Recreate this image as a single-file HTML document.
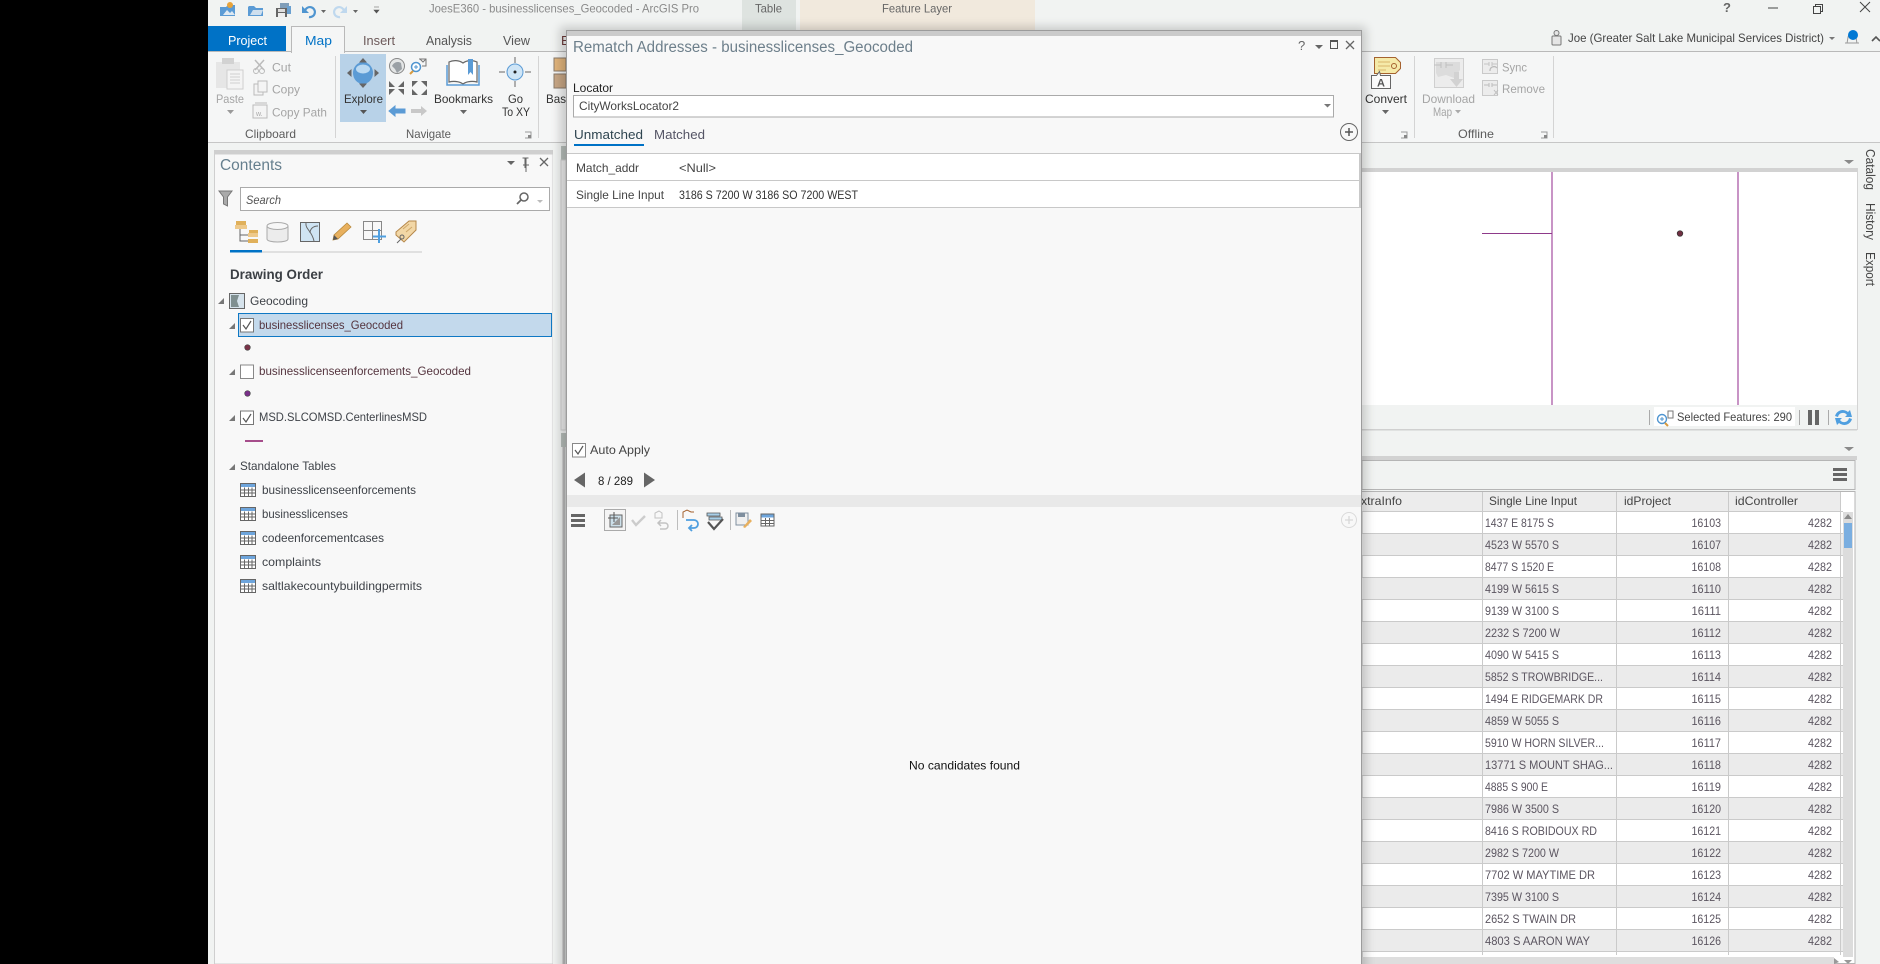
<!DOCTYPE html>
<html lang="en">
<head>
<meta charset="utf-8">
<title>Rematch Addresses - ArcGIS Pro</title>
<style>
html,body{margin:0;padding:0;width:1880px;height:964px;overflow:hidden;background:#f1f3f2}
svg{display:block}
text{font-family:"Liberation Sans",sans-serif;font-size:12px;fill:#4a4a4a;white-space:pre}
.g{fill:#a5a5a5}
.d{fill:#333}
.t{fill:#5c5c5c}
.n{fill:#5b5560}
</style>
</head>
<body>
<svg xmlns="http://www.w3.org/2000/svg" width="1880" height="964" viewBox="0 0 1880 964">
<defs>
<filter id="sh" x="-5%" y="-5%" width="110%" height="110%"><feGaussianBlur stdDeviation="5"/></filter>
<g id="tbl"><rect x="0" y="0" width="15" height="13" fill="#fff" stroke="#666" stroke-width="1"/><rect x="0.5" y="0.5" width="14" height="3" fill="#6ea5dc"/><path d="M0 6.5h15M0 9.5h15M4 4v9M8 4v9M11.5 4v9" stroke="#666" stroke-width="1" fill="none"/></g>
</defs>

<!-- base -->
<rect width="1880" height="964" fill="#f1f3f2"/>
<rect x="0" y="0" width="208" height="964" fill="#000"/>

<!-- title bar context tabs -->
<rect x="742" y="0" width="54" height="30" fill="#dee3e0"/>
<rect x="800" y="0" width="235" height="30" fill="#f1e9dd"/>
<text x="755" y="12.500" textLength="27" lengthAdjust="spacingAndGlyphs" style="fill:#666">Table</text>
<text x="882" y="12.500" textLength="70" lengthAdjust="spacingAndGlyphs" style="fill:#666">Feature Layer</text>
<text x="429" y="12.500" textLength="270" lengthAdjust="spacingAndGlyphs" style="fill:#8a8a8a">JoesE360 - businesslicenses_Geocoded - ArcGIS Pro</text>

<!-- QAT icons -->
<g>
<path d="M220 7h6l2-2h7v11h-15z" fill="#5b9bd5"/><path d="M223 15l4-5 3 3 2-2 3 4z" fill="#dfe9f2"/><circle cx="230" cy="5" r="3" fill="#e8a33a"/>
<path d="M248 7v9h15V8h-7l-2-2h-5z" fill="#5b9bd5"/><path d="M250 15l3-5h10l-2 5z" fill="#cfdfee"/>
<rect x="276" y="8" width="11" height="9" fill="#666"/><rect x="278" y="13" width="7" height="4" fill="#eee"/><rect x="278" y="9" width="7" height="3" fill="#ddd"/><path d="M280 3h9v11h-2V8h-7z" fill="#7f9db8"/><rect x="287" y="6" width="4" height="8" fill="#6aa0d0"/>
<path d="M305 11a5 5 0 1 1 4 6" fill="none" stroke="#4f95d0" stroke-width="2.200"/><path d="M302 6v7h7z" fill="#4f95d0"/>
<path d="M321 10h5l-2.500 3z" fill="#666"/>
<path d="M344 11a5 5 0 1 0-4 6" fill="none" stroke="#bfd8ee" stroke-width="2.200"/><path d="M347 6v7h-7z" fill="#bfd8ee"/>
<path d="M353 10h5l-2.500 3z" fill="#666"/>
<path d="M374 7h5M374 10h5l-2.500 3z" fill="#555" stroke="#555" stroke-width=".6"/>
</g>

<!-- ribbon -->
<rect x="208" y="51" width="1672" height="91" fill="#f5f6f6"/>
<rect x="208" y="51" width="1672" height="1" fill="#b9b9b9"/>
<rect x="208" y="142" width="1672" height="1" fill="#c6c6c6"/>
<rect x="208" y="26" width="78" height="25" fill="#0072c6"/>
<rect x="291.500" y="26.500" width="53" height="26" fill="#f5f6f6" stroke="#b9b9b9"/><rect x="292" y="50" width="52" height="3" fill="#f5f6f6"/>
<text x="228" y="45" textLength="39" lengthAdjust="spacingAndGlyphs" style="fill:#fff;font-size:13px">Project</text>
<text x="305" y="45" textLength="27" lengthAdjust="spacingAndGlyphs" style="fill:#0072c6;font-size:13px">Map</text>
<text x="363" y="45" textLength="32" lengthAdjust="spacingAndGlyphs" style="fill:#6d5a5a;font-size:13px">Insert</text>
<text x="426" y="45" textLength="46" lengthAdjust="spacingAndGlyphs" style="fill:#555;font-size:13px">Analysis</text>
<text x="503" y="45" textLength="27" lengthAdjust="spacingAndGlyphs" style="fill:#555;font-size:13px">View</text>
<text x="561" y="45" style="fill:#6d3a3a;font-size:13px">E</text>

<rect x="340" y="54" width="46" height="68" fill="#b8d2e8"/>
<path d="M335.500 56v82M538.500 56v82M1414.500 56v82M1553.500 56v82" stroke="#d4d4d4"/>

<!-- paste -->
<rect x="216" y="62" width="24" height="26" fill="#e6e6e6"/><rect x="222" y="58" width="12" height="6" fill="#d2d2d2"/><rect x="227" y="70" width="16" height="19" fill="#f4f4f4" stroke="#cfcfcf"/><path d="M230 74h10M230 77h10M230 80h10M230 83h10" stroke="#cfcfcf"/>
<text x="216" y="103" textLength="28" lengthAdjust="spacingAndGlyphs" class="g">Paste</text><path d="M227 110h7l-3.500 4z" fill="#9a9a9a"/>
<path d="M255 60l9 10M264 60l-9 10" stroke="#bbb" stroke-width="1.500"/><circle cx="256" cy="71" r="2.500" fill="none" stroke="#bbb"/><circle cx="262" cy="71" r="2.500" fill="none" stroke="#bbb"/>
<text x="272" y="71.500" textLength="19" lengthAdjust="spacingAndGlyphs" class="g">Cut</text>
<rect x="254" y="84" width="9" height="11" fill="#f4f4f4" stroke="#bbb"/><rect x="258" y="81" width="9" height="11" fill="#f4f4f4" stroke="#bbb"/>
<text x="272" y="93.500" textLength="28" lengthAdjust="spacingAndGlyphs" class="g">Copy</text>
<rect x="253" y="105" width="14" height="13" fill="#f4f4f4" stroke="#bbb"/><path d="M255 103h12" stroke="#bbb"/><text x="256" y="116" style="font-size:7px;fill:#aaa">w.</text>
<text x="272" y="116.500" textLength="55" lengthAdjust="spacingAndGlyphs" class="g">Copy Path</text>
<text x="245" y="138" textLength="51" lengthAdjust="spacingAndGlyphs" class="t">Clipboard</text>

<!-- explore -->
<ellipse cx="363" cy="73" rx="10" ry="11" fill="#5b9bd5"/><ellipse cx="363" cy="69" rx="7" ry="4.500" fill="#bcdaf2"/>
<path d="M363 58l4 4.500h-8zM363 88l4-4.500h-8zM347 73l4.500-4v8zM379 73l-4.500-4v8z" fill="#666"/>
<text x="344" y="103" textLength="39" lengthAdjust="spacingAndGlyphs" class="d">Explore</text><path d="M360 110h7l-3.500 4z" fill="#555"/>
<circle cx="397" cy="66" r="7.500" fill="#e4e6e6" stroke="#888"/><path d="M392 66c2-4 6-5 9-3l1 6-5 4-2-4z" fill="#9aa0a5"/>
<circle cx="416" cy="67" r="4.500" fill="#fff" stroke="#4f95d0" stroke-width="1.500"/><path d="M414 67h4M416 65v4" stroke="#4f95d0"/><path d="M413 71l-3 3" stroke="#d99b3e" stroke-width="2"/><path d="M419 59h7v7h-4" fill="none" stroke="#777"/><path d="M420 59l3 3 3-3" fill="none" stroke="#777"/>
<!-- fixed zoom in / out clusters -->
<path d="M389 81l6 6H389zM404 81l-6 6h6zM389 95l6-6H389zM404 95l-6-6h6z" fill="#666" transform="translate(0,0)"/>
<path d="M412 87v-6h6zM427 87v-6h-6zM412 89v6h6zM427 89v6h-6z" fill="#666"/>
<path d="M405 111h-10M395 106l-6 5 6 5v-3h10v-4h-10z" fill="#5b9bd5" stroke="#5b9bd5"/>
<path d="M411 109h10v-3l6 5-6 5v-3h-10z" fill="#c8c8c8"/>
<text x="406" y="138" textLength="45" lengthAdjust="spacingAndGlyphs" class="t">Navigate</text>
<path d="M525 132h6v6h-6" fill="none" stroke="#999"/><path d="M528 135h3v3h-3z" fill="#888"/>
<!-- bookmarks -->
<path d="M463 84c-4-3-10-3-14-2V62c4-2 10-2 14 1c4-3 10-3 14-1v20c-4-1-10-1-14 2z" fill="#fff" stroke="#666" stroke-width="1.200"/><path d="M447 65v20h32V65" fill="none" stroke="#5b9bd5" stroke-width="1.500"/><path d="M468 59h5v16l-2.500-3-2.500 3z" fill="#5b9bd5"/>
<text x="434" y="103" textLength="59" lengthAdjust="spacingAndGlyphs" class="d">Bookmarks</text><path d="M460 110h7l-3.500 4z" fill="#666"/>
<!-- go to xy -->
<circle cx="515" cy="72" r="8" fill="#cfe5f6" stroke="#5b9bd5"/><circle cx="515" cy="72" r="1.500" fill="#222"/><path d="M515 57v6M515 81v6M499 72h6M525 72h6" stroke="#666"/>
<text x="508" y="103" textLength="15" lengthAdjust="spacingAndGlyphs" class="d">Go</text>
<text x="502" y="116" textLength="28" lengthAdjust="spacingAndGlyphs" class="d">To XY</text>
<!-- basemap -->
<rect x="554" y="58" width="12" height="13" fill="#e2b57c" stroke="#8a7a6a"/><rect x="554" y="74" width="12" height="14" fill="#c9a886" stroke="#8a7a6a"/>
<text x="546" y="103" textLength="20" lengthAdjust="spacingAndGlyphs" class="d">Bas</text>

<!-- right ribbon -->
<path d="M1374.500 57.500h21l5 5v6l-5 5h-21z" fill="#f5eaa9" stroke="#a5622f"/><path d="M1378 62h12M1378 66h12M1378 70h8" stroke="#d9b56a"/><circle cx="1394" cy="66" r="2.500" fill="none" stroke="#a5622f"/>
<path d="M1371.500 75.500h5l3-4 1 4h10v13h-19z" fill="#fbfbfb" stroke="#666"/><text x="1377" y="86.500" style="font-size:11px;font-weight:bold;fill:#555">A</text>
<text x="1365" y="103" textLength="42" lengthAdjust="spacingAndGlyphs" class="d">Convert</text><path d="M1382 110h7l-3.500 4z" fill="#666"/>
<path d="M1401 132h6v6h-6" fill="none" stroke="#999"/><path d="M1404 135h3v3h-3z" fill="#888"/>
<rect x="1434.500" y="58.500" width="29" height="29" fill="#ececec" stroke="#cfcfcf"/><path d="M1436 62h24v8l-6 8-8-3-8 2-2-4z" fill="#dcdcdc"/><path d="M1434 65h7M1446 65h7M1441 62v6M1446 62v6" stroke="#c0c0c0"/><path d="M1454 72h5v7h4l-6.500 8-6.500-8h4z" fill="#d2d2d2"/>
<text x="1422" y="103" textLength="53" lengthAdjust="spacingAndGlyphs" class="g">Download</text>
<text x="1433" y="116" textLength="19" lengthAdjust="spacingAndGlyphs" class="g">Map</text><path d="M1455 110h6l-3 3.500z" fill="#aaa"/>
<rect x="1482.500" y="59.500" width="15" height="14" fill="#ececec" stroke="#c9c9c9"/><path d="M1484 64h5M1492 64h5M1489 62v4M1492 62v4" stroke="#c4c4c4"/><path d="M1490 71a4 4 0 0 1 7-3" fill="none" stroke="#bbb" stroke-width="1.300"/>
<rect x="1482.500" y="80.500" width="15" height="15" fill="#ececec" stroke="#c9c9c9"/><path d="M1484 85h5M1492 85h5M1489 83v4M1492 83v4M1494 90l4 5M1498 90l-4 5" stroke="#bdbdbd"/>
<text x="1502" y="71.500" textLength="25" lengthAdjust="spacingAndGlyphs" class="g">Sync</text>
<text x="1502" y="93" textLength="43" lengthAdjust="spacingAndGlyphs" class="g">Remove</text>
<text x="1458" y="138" textLength="36" lengthAdjust="spacingAndGlyphs" class="t">Offline</text>
<path d="M1541 132h6v6h-6" fill="none" stroke="#999"/><path d="M1544 135h3v3h-3z" fill="#888"/>

<!-- window controls -->
<text x="1723" y="12" style="font-size:13px;font-weight:bold;fill:#666">?</text>
<path d="M1768 8h10" stroke="#444"/><rect x="1815.500" y="4.500" width="7" height="7" fill="none" stroke="#444"/><rect x="1813.500" y="6.500" width="7" height="7" fill="#f1f3f2" stroke="#444"/>
<path d="M1860 2l10 10M1870 2l-10 10" stroke="#444"/>
<rect x="1552" y="36" width="9" height="9" rx="1" fill="#e5e5e5" stroke="#777"/><circle cx="1556.500" cy="33" r="2.500" fill="#e5e5e5" stroke="#777"/>
<text x="1568" y="42" textLength="256" lengthAdjust="spacingAndGlyphs" style="fill:#444">Joe (Greater Salt Lake Municipal Services District)</text>
<path d="M1829 37h6l-3 3z" fill="#777"/>
<path d="M1845 43h14M1847 43c1-3 0-9 5-10c5 1 4 7 5 10" fill="#f1f3f2" stroke="#999"/><circle cx="1853" cy="35" r="5" fill="#0078d4"/>
<path d="M1872 41l4-4 4 4" fill="none" stroke="#555" stroke-width="1.600"/>

<!-- side bars -->
<path d="M1854 160h-10l5 4z" fill="#8a8a8a"/>
<g transform="translate(1862,149) rotate(90)"><text x="0" y="-4" textLength="41" lengthAdjust="spacingAndGlyphs" style="font-size:13px;fill:#444">Catalog</text><text x="54" y="-4" textLength="37" lengthAdjust="spacingAndGlyphs" style="font-size:13px;fill:#444">History</text><text x="103" y="-4" textLength="34" lengthAdjust="spacingAndGlyphs" style="font-size:13px;fill:#444">Export</text></g>

<!-- map -->
<rect x="1362" y="168" width="495" height="4" fill="#d2d2d2"/>
<rect x="1362" y="172" width="495" height="233" fill="#fff"/>
<path d="M1552 172v233M1738 172v233" stroke="#9a3d96" stroke-width="1.100"/>
<path d="M1482 233.500h70" stroke="#8e3a8a" stroke-width="1.100"/>
<circle cx="1680" cy="233.500" r="2.800" fill="#6f2f42" stroke="#333" stroke-width=".7"/>
<rect x="1857" y="168" width="1" height="262" fill="#d4d4d4"/>
<rect x="1362" y="429" width="495" height="1.500" fill="#d0d0d0"/>
<rect x="1654" y="407" width="141" height="19" fill="#fff"/>
<path d="M1649.500 410v15M1799.500 410v15M1828.500 410v15" stroke="#aaa"/>
<circle cx="1662" cy="419" r="4.500" fill="#fff" stroke="#4f95d0" stroke-width="1.400"/><path d="M1660 419h4M1662 417v4" stroke="#4f95d0"/><path d="M1665 423l3 3" stroke="#d99b3e" stroke-width="2"/><path d="M1668 411h5v7h-5z" fill="#fff" stroke="#777"/>
<text x="1677" y="421" textLength="115" lengthAdjust="spacingAndGlyphs" style="fill:#444">Selected Features: 290</text>
<rect x="1808" y="410" width="4" height="15" fill="#666"/><rect x="1815" y="410" width="4" height="15" fill="#666"/>
<path d="M1835 416a8 8 0 0 1 13-4l2-2 2 7h-7l2-2a5 5 0 0 0-9 2zM1852 419a8 8 0 0 1-13 4l-2 2-2-7h7l-2 2a5 5 0 0 0 9-2z" fill="#4f9fe0"/>
<path d="M1854 447h-10l5 4z" fill="#8a8a8a"/>

<!-- table pane -->
<rect x="1362" y="456" width="495" height="4" fill="#d2d2d2"/>
<rect x="1362" y="460.500" width="493" height="29" fill="#f1f3f2" stroke="#b5b5b5"/>
<rect x="1833" y="468" width="14" height="3" fill="#666"/><rect x="1833" y="473" width="14" height="3" fill="#666"/><rect x="1833" y="478" width="14" height="3" fill="#666"/>
<rect x="1362" y="491.500" width="493" height="472" fill="#fff" stroke="#b5b5b5"/>
<rect x="1362" y="492" width="478" height="19" fill="#ececec"/>
<g fill="#ebebeb">
<rect x="1362" y="533" width="481" height="22"/><rect x="1362" y="577" width="481" height="22"/><rect x="1362" y="621" width="481" height="22"/><rect x="1362" y="665" width="481" height="22"/><rect x="1362" y="709" width="481" height="22"/><rect x="1362" y="753" width="481" height="22"/><rect x="1362" y="797" width="481" height="22"/><rect x="1362" y="841" width="481" height="22"/><rect x="1362" y="885" width="481" height="22"/><rect x="1362" y="929" width="481" height="22"/>
</g>
<g stroke="#cacaca" fill="none">
<path d="M1362 511.500h481M1362 533.500h481M1362 555.500h481M1362 577.500h481M1362 599.500h481M1362 621.500h481M1362 643.500h481M1362 665.500h481M1362 687.500h481M1362 709.500h481M1362 731.500h481M1362 753.500h481M1362 775.500h481M1362 797.500h481M1362 819.500h481M1362 841.500h481M1362 863.500h481M1362 885.500h481M1362 907.500h481M1362 929.500h481M1362 951.500h481"/>
<path d="M1482.500 492v463M1616.500 492v463M1728.500 492v463M1840.500 492v463"/>
</g>
<text x="1361" y="505" textLength="41" lengthAdjust="spacingAndGlyphs" style="fill:#444">xtraInfo</text>
<text x="1489" y="505" textLength="88" lengthAdjust="spacingAndGlyphs" style="fill:#444">Single Line Input</text>
<text x="1624" y="505" textLength="47" lengthAdjust="spacingAndGlyphs" style="fill:#444">idProject</text>
<text x="1735" y="505" textLength="63" lengthAdjust="spacingAndGlyphs" style="fill:#444">idController</text>

<g class="rows">
<text class="n" x="1485" y="527" textLength="69" lengthAdjust="spacingAndGlyphs">1437 E 8175 S</text><text class="n" x="1691.500" y="527" textLength="29.500" lengthAdjust="spacingAndGlyphs">16103</text><text class="n" x="1808" y="527" textLength="24" lengthAdjust="spacingAndGlyphs">4282</text>
<text class="n" x="1485" y="549" textLength="74" lengthAdjust="spacingAndGlyphs">4523 W 5570 S</text><text class="n" x="1691.500" y="549" textLength="29.500" lengthAdjust="spacingAndGlyphs">16107</text><text class="n" x="1808" y="549" textLength="24" lengthAdjust="spacingAndGlyphs">4282</text>
<text class="n" x="1485" y="571" textLength="69" lengthAdjust="spacingAndGlyphs">8477 S 1520 E</text><text class="n" x="1691.500" y="571" textLength="29.500" lengthAdjust="spacingAndGlyphs">16108</text><text class="n" x="1808" y="571" textLength="24" lengthAdjust="spacingAndGlyphs">4282</text>
<text class="n" x="1485" y="593" textLength="74" lengthAdjust="spacingAndGlyphs">4199 W 5615 S</text><text class="n" x="1691.500" y="593" textLength="29.500" lengthAdjust="spacingAndGlyphs">16110</text><text class="n" x="1808" y="593" textLength="24" lengthAdjust="spacingAndGlyphs">4282</text>
<text class="n" x="1485" y="615" textLength="74" lengthAdjust="spacingAndGlyphs">9139 W 3100 S</text><text class="n" x="1691.500" y="615" textLength="29.500" lengthAdjust="spacingAndGlyphs">16111</text><text class="n" x="1808" y="615" textLength="24" lengthAdjust="spacingAndGlyphs">4282</text>
<text class="n" x="1485" y="637" textLength="75" lengthAdjust="spacingAndGlyphs">2232 S 7200 W</text><text class="n" x="1691.500" y="637" textLength="29.500" lengthAdjust="spacingAndGlyphs">16112</text><text class="n" x="1808" y="637" textLength="24" lengthAdjust="spacingAndGlyphs">4282</text>
<text class="n" x="1485" y="659" textLength="74" lengthAdjust="spacingAndGlyphs">4090 W 5415 S</text><text class="n" x="1691.500" y="659" textLength="29.500" lengthAdjust="spacingAndGlyphs">16113</text><text class="n" x="1808" y="659" textLength="24" lengthAdjust="spacingAndGlyphs">4282</text>
<text class="n" x="1485" y="681" textLength="118" lengthAdjust="spacingAndGlyphs">5852 S TROWBRIDGE...</text><text class="n" x="1691.500" y="681" textLength="29.500" lengthAdjust="spacingAndGlyphs">16114</text><text class="n" x="1808" y="681" textLength="24" lengthAdjust="spacingAndGlyphs">4282</text>
<text class="n" x="1485" y="703" textLength="118" lengthAdjust="spacingAndGlyphs">1494 E RIDGEMARK DR</text><text class="n" x="1691.500" y="703" textLength="29.500" lengthAdjust="spacingAndGlyphs">16115</text><text class="n" x="1808" y="703" textLength="24" lengthAdjust="spacingAndGlyphs">4282</text>
<text class="n" x="1485" y="725" textLength="74" lengthAdjust="spacingAndGlyphs">4859 W 5055 S</text><text class="n" x="1691.500" y="725" textLength="29.500" lengthAdjust="spacingAndGlyphs">16116</text><text class="n" x="1808" y="725" textLength="24" lengthAdjust="spacingAndGlyphs">4282</text>
<text class="n" x="1485" y="747" textLength="119" lengthAdjust="spacingAndGlyphs">5910 W HORN SILVER...</text><text class="n" x="1691.500" y="747" textLength="29.500" lengthAdjust="spacingAndGlyphs">16117</text><text class="n" x="1808" y="747" textLength="24" lengthAdjust="spacingAndGlyphs">4282</text>
<text class="n" x="1485" y="769" textLength="128" lengthAdjust="spacingAndGlyphs">13771 S MOUNT SHAG...</text><text class="n" x="1691.500" y="769" textLength="29.500" lengthAdjust="spacingAndGlyphs">16118</text><text class="n" x="1808" y="769" textLength="24" lengthAdjust="spacingAndGlyphs">4282</text>
<text class="n" x="1485" y="791" textLength="63" lengthAdjust="spacingAndGlyphs">4885 S 900 E</text><text class="n" x="1691.500" y="791" textLength="29.500" lengthAdjust="spacingAndGlyphs">16119</text><text class="n" x="1808" y="791" textLength="24" lengthAdjust="spacingAndGlyphs">4282</text>
<text class="n" x="1485" y="813" textLength="74" lengthAdjust="spacingAndGlyphs">7986 W 3500 S</text><text class="n" x="1691.500" y="813" textLength="29.500" lengthAdjust="spacingAndGlyphs">16120</text><text class="n" x="1808" y="813" textLength="24" lengthAdjust="spacingAndGlyphs">4282</text>
<text class="n" x="1485" y="835" textLength="112" lengthAdjust="spacingAndGlyphs">8416 S ROBIDOUX RD</text><text class="n" x="1691.500" y="835" textLength="29.500" lengthAdjust="spacingAndGlyphs">16121</text><text class="n" x="1808" y="835" textLength="24" lengthAdjust="spacingAndGlyphs">4282</text>
<text class="n" x="1485" y="857" textLength="74" lengthAdjust="spacingAndGlyphs">2982 S 7200 W</text><text class="n" x="1691.500" y="857" textLength="29.500" lengthAdjust="spacingAndGlyphs">16122</text><text class="n" x="1808" y="857" textLength="24" lengthAdjust="spacingAndGlyphs">4282</text>
<text class="n" x="1485" y="879" textLength="110" lengthAdjust="spacingAndGlyphs">7702 W MAYTIME DR</text><text class="n" x="1691.500" y="879" textLength="29.500" lengthAdjust="spacingAndGlyphs">16123</text><text class="n" x="1808" y="879" textLength="24" lengthAdjust="spacingAndGlyphs">4282</text>
<text class="n" x="1485" y="901" textLength="74" lengthAdjust="spacingAndGlyphs">7395 W 3100 S</text><text class="n" x="1691.500" y="901" textLength="29.500" lengthAdjust="spacingAndGlyphs">16124</text><text class="n" x="1808" y="901" textLength="24" lengthAdjust="spacingAndGlyphs">4282</text>
<text class="n" x="1485" y="923" textLength="91" lengthAdjust="spacingAndGlyphs">2652 S TWAIN DR</text><text class="n" x="1691.500" y="923" textLength="29.500" lengthAdjust="spacingAndGlyphs">16125</text><text class="n" x="1808" y="923" textLength="24" lengthAdjust="spacingAndGlyphs">4282</text>
<text class="n" x="1485" y="945" textLength="105" lengthAdjust="spacingAndGlyphs">4803 S AARON WAY</text><text class="n" x="1691.500" y="945" textLength="29.500" lengthAdjust="spacingAndGlyphs">16126</text><text class="n" x="1808" y="945" textLength="24" lengthAdjust="spacingAndGlyphs">4282</text>
</g>
<rect x="1843" y="512" width="10" height="445" fill="#dcdcdc"/>
<rect x="1844" y="523" width="8" height="25" fill="#7aaee0"/>
<path d="M1848 514l4 5h-8z" fill="#8a8a8a"/>
<rect x="1362" y="957" width="472" height="7" fill="#dedede"/>
<path d="M1834 958l5 4-5 2zM1844 960h8l-4 4z" fill="#999"/>

<!-- contents pane -->
<rect x="208" y="143" width="358" height="821" fill="#f1f3f2"/>
<rect x="214" y="150" width="339" height="5" fill="#cfcfcf"/>
<rect x="214.500" y="154" width="338.500" height="810" fill="#f8f8f8" stroke="#cfcfcf"/>
<text x="220" y="170" textLength="62" lengthAdjust="spacingAndGlyphs" style="font-size:15.500px;fill:#667f8e">Contents</text>
<path d="M507 161h8l-4 4z" fill="#666"/>
<path d="M525 158v10M522.500 158h6M526 158v7h3M523 165h6M526 165v7" stroke="#666" fill="none"/>
<path d="M540 158l8 8M548 158l-8 8" stroke="#666" stroke-width="1.300"/>
<path d="M219 191h13l-4.500 6v9l-4-2v-7z" fill="#aaa" stroke="#777"/>
<rect x="240.500" y="187.500" width="309" height="23" fill="#fff" stroke="#aaa"/>
<text x="246" y="204" textLength="35" lengthAdjust="spacingAndGlyphs" style="font-style:italic;fill:#555">Search</text>
<circle cx="524" cy="197" r="4" fill="none" stroke="#666" stroke-width="1.500"/><path d="M521 200l-4 4" stroke="#666" stroke-width="1.800"/>
<path d="M537 200h6l-3 3z" fill="#bbb"/>
<!-- pane tabs -->
<rect x="236" y="221" width="10" height="4" fill="#e0b05a"/><rect x="235" y="225" width="12" height="4" fill="#eec98a"/><rect x="249" y="230" width="9" height="3" fill="#e0b05a"/><rect x="248" y="233" width="10" height="4" fill="#eec98a"/><rect x="248" y="239" width="10" height="4" fill="#e0b05a"/><path d="M240 229v12h8M240 235h8" stroke="#666" fill="none"/>
<path d="M267 226v13c0 4 21 4 21 0v-13" fill="#ececec" stroke="#aaa"/><ellipse cx="277.500" cy="226" rx="10.500" ry="3.500" fill="#f7f7f7" stroke="#aaa"/>
<rect x="300.500" y="222.500" width="19" height="19" fill="#cfe4f3" stroke="#666"/><path d="M306 223c-1 6 6 8 8 18M318 226c-5 0-8 3-8 7" fill="none" stroke="#666"/>
<path d="M333 240l1-5 13-12 4 4-13 12z" fill="#e8b05e" stroke="#b98a3d" stroke-width=".8"/><path d="M333 240l1-5 4 4z" fill="#555"/>
<path d="M363.500 221.500h18v18h-18zM372.500 221.500v18M363.500 230.500h18" fill="none" stroke="#888"/><path d="M379 229v14M373 236.500h13" stroke="#4f9fe0" stroke-width="2"/>
<path d="M396 232l13-11h7v9l-12 12-8-7z" fill="#f2d7a6" stroke="#b5874a"/><path d="M403 229l6-5M406 232l6-5" stroke="#cfa86a"/><circle cx="402" cy="237" r="2" fill="none" stroke="#666"/><path d="M401 239l-4 4" stroke="#666"/>
<rect x="230" y="250" width="32" height="2.500" fill="#0072c6"/><rect x="262" y="251.500" width="160" height="1" fill="#c8c8c8"/>

<text x="230" y="279" textLength="93" lengthAdjust="spacingAndGlyphs" style="font-size:14px;fill:#3b3f44;font-weight:bold">Drawing Order</text>
<path d="M218 304l6-6v6z" fill="#777"/>
<rect x="229.500" y="293.500" width="15" height="15" fill="#d6e3ec" stroke="#666"/><path d="M231 295h8l-2 6 2 6h-8z" fill="#7f8f90"/>
<text x="250" y="305" textLength="58" lengthAdjust="spacingAndGlyphs" style="fill:#3e4248">Geocoding</text>

<rect x="238.500" y="313.500" width="313" height="23" fill="#c3d9ec" stroke="#0f78c4"/>
<path d="M229 329l6-6v6z" fill="#777"/>
<rect x="240.500" y="318.500" width="13" height="13.500" fill="#fff" stroke="#777"/><path d="M243 325l3 4 5-8" fill="none" stroke="#555" stroke-width="1.200"/>
<text x="259" y="329" textLength="144" lengthAdjust="spacingAndGlyphs" style="fill:#55353f">businesslicenses_Geocoded</text>
<circle cx="247.500" cy="347.500" r="2.800" fill="#7a3348" stroke="#444" stroke-width=".6"/>

<path d="M229 375l6-6v6z" fill="#777"/>
<rect x="240.500" y="365" width="13" height="13.500" fill="#fff" stroke="#888"/>
<text x="259" y="375" textLength="212" lengthAdjust="spacingAndGlyphs" style="fill:#55353f">businesslicenseenforcements_Geocoded</text>
<circle cx="247.500" cy="393.500" r="2.800" fill="#7a2f8a" stroke="#444" stroke-width=".6"/>

<path d="M229 421l6-6v6z" fill="#777"/>
<rect x="240.500" y="411" width="13" height="13.500" fill="#fff" stroke="#777"/><path d="M243 418l3 4 5-8" fill="none" stroke="#555" stroke-width="1.200"/>
<text x="259" y="421" textLength="168" lengthAdjust="spacingAndGlyphs" style="fill:#3e4248">MSD.SLCOMSD.CenterlinesMSD</text>
<rect x="245" y="440" width="18" height="2" fill="#a64d8b"/>

<path d="M229 470l6-6v6z" fill="#777"/>
<text x="240" y="470" textLength="96" lengthAdjust="spacingAndGlyphs" style="fill:#3e4248">Standalone Tables</text>
<use href="#tbl" x="240.500" y="483.500"/><text x="262" y="494" textLength="154" lengthAdjust="spacingAndGlyphs" style="fill:#3e4248">businesslicenseenforcements</text>
<use href="#tbl" x="240.500" y="507.500"/><text x="262" y="518" textLength="86" lengthAdjust="spacingAndGlyphs" style="fill:#3e4248">businesslicenses</text>
<use href="#tbl" x="240.500" y="531.500"/><text x="262" y="542" textLength="122" lengthAdjust="spacingAndGlyphs" style="fill:#3e4248">codeenforcementcases</text>
<use href="#tbl" x="240.500" y="555.500"/><text x="262" y="566" textLength="59" lengthAdjust="spacingAndGlyphs" style="fill:#3e4248">complaints</text>
<use href="#tbl" x="240.500" y="579.500"/><text x="262" y="590" textLength="160" lengthAdjust="spacingAndGlyphs" style="fill:#3e4248">saltlakecountybuildingpermits</text>

<!-- splitter between contents and dialog -->
<rect x="553" y="143" width="13" height="821" fill="#f1f3f2"/>
<rect x="561" y="146" width="5" height="14" fill="#b8bfbb"/><rect x="561" y="160" width="5" height="270" fill="#eeeeee" stroke="#cfcfcf" stroke-width="1"/>
<rect x="561" y="433" width="5" height="14" fill="#b8bfbb"/>
<rect x="562.500" y="447" width="3" height="517" fill="#bdbdbd"/>

<!-- dialog shadow -->
<rect x="560" y="27" width="806" height="950" fill="#000" opacity=".18" filter="url(#sh)"/>
<rect x="566" y="31" width="795" height="933" fill="#f8f8f8"/>
<rect x="566" y="31" width="795" height="5" fill="#cbcbcb"/>
<path d="M566.500 964V30.500h795V964" fill="none" stroke="#9c9c9c"/>

<text x="573" y="52" textLength="340" lengthAdjust="spacingAndGlyphs" style="font-size:15.500px;fill:#6d7f8b">Rematch Addresses - businesslicenses_Geocoded</text>
<text x="1298" y="50" style="font-size:13px;fill:#666">?</text>
<path d="M1315 45h8l-4 4z" fill="#666"/>
<path d="M1330.500 40.500h7v8h-7z" fill="none" stroke="#555"/><path d="M1330 41h8" stroke="#555" stroke-width="2"/>
<path d="M1346 41l8 8M1354 41l-8 8" stroke="#666" stroke-width="1.300"/>

<text x="573" y="92" textLength="40" lengthAdjust="spacingAndGlyphs" style="fill:#222">Locator</text>
<rect x="573.500" y="95.500" width="760" height="21.500" fill="#fff" stroke="#aaa"/>
<text x="579" y="110" textLength="100" lengthAdjust="spacingAndGlyphs" style="fill:#444">CityWorksLocator2</text>
<path d="M1324 104h7l-3.500 3.500z" fill="#777"/>

<text x="574" y="139" textLength="69" lengthAdjust="spacingAndGlyphs" style="font-size:13px;fill:#2f4550">Unmatched</text>
<rect x="574" y="144" width="70" height="2" fill="#0072c6"/>
<text x="654" y="139" textLength="51" lengthAdjust="spacingAndGlyphs" style="font-size:13px;fill:#556">Matched</text>
<circle cx="1349" cy="132" r="8.500" fill="#f8f8f8" stroke="#666"/><path d="M1345 132h8M1349 128v8" stroke="#555" stroke-width="1.500"/>

<rect x="567" y="153.500" width="792" height="53.500" fill="#fff"/>
<path d="M567 153.500h792M567 180.500h792M567 207.500h792" stroke="#c8c8c8"/>
<rect x="1359" y="153" width="2" height="55" fill="#c9c9c9"/>
<text x="576" y="172" textLength="63" lengthAdjust="spacingAndGlyphs" style="fill:#444">Match_addr</text>
<text x="679" y="172" textLength="37" lengthAdjust="spacingAndGlyphs" style="fill:#444">&lt;Null&gt;</text>
<text x="576" y="199" textLength="88" lengthAdjust="spacingAndGlyphs" style="fill:#444">Single Line Input</text>
<text x="679" y="199" textLength="179" lengthAdjust="spacingAndGlyphs" style="fill:#333">3186 S 7200 W 3186 SO 7200 WEST</text>

<rect x="572.500" y="443.500" width="13" height="13.500" fill="#fff" stroke="#888"/><path d="M575 450l3 4 5-8" fill="none" stroke="#555" stroke-width="1.200"/>
<text x="590" y="454" textLength="60" lengthAdjust="spacingAndGlyphs" style="fill:#444">Auto Apply</text>
<path d="M574 480l11-7.500v15z" fill="#666"/>
<text x="598" y="485" textLength="35" lengthAdjust="spacingAndGlyphs" style="fill:#222">8 / 289</text>
<path d="M655 480l-11-7.500v15z" fill="#666"/>

<rect x="567" y="495" width="794" height="12" fill="#e9e9e9"/>

<rect x="571" y="514" width="14" height="3" fill="#666"/><rect x="571" y="519" width="14" height="3" fill="#666"/><rect x="571" y="524" width="14" height="3" fill="#666"/>
<rect x="604.500" y="509.500" width="21" height="21" fill="#f4f4f4" stroke="#aaa"/>
<rect x="610" y="515" width="12" height="12" fill="#cde0ea" stroke="#666"/><path d="M608 518h10M614 512v10" stroke="#555"/><path d="M612 525l8-8v8z" fill="#999"/>
<path d="M632 520l4 5 9-9" fill="none" stroke="#ccc" stroke-width="2.400"/>
<path d="M655 518v-5l4-2 3 2v5z" fill="none" stroke="#c2c2c2"/><path d="M658 523h7a3 3 0 0 1 0 6h-5M661 520l-3 3 3 3" fill="none" stroke="#c2c2c2" stroke-width="1.500"/>
<path d="M677.500 510v20M730.500 510v20" stroke="#bdbdbd"/>
<path d="M683 518v-6l4-2 4 2h3" fill="none" stroke="#a5622f"/><path d="M686 520h8a4 4 0 0 1 0 8h-4M692 525l-3 3 3 3" fill="none" stroke="#4f9fe0" stroke-width="1.800"/>
<path d="M707 513h13v3h-13zM709 517h13v3h-13z" fill="#a8cfe8" stroke="#555" stroke-width=".8"/><path d="M708 522l6 7 9-10" fill="none" stroke="#555" stroke-width="2.200"/>
<rect x="736" y="513" width="12" height="12" fill="#f0f0f0" stroke="#7f8f9f"/><rect x="738" y="513" width="7" height="4" fill="#7f8f9f"/><path d="M743 527l7-8 2 2-7 7z" fill="#e8b05e"/>
<rect x="761" y="514" width="13" height="12" fill="#fff" stroke="#666"/><rect x="761.500" y="514.500" width="12" height="3" fill="#6ea5dc"/><path d="M761 520.500h13M761 523.500h13M765.500 518v8M769.500 518v8" stroke="#666"/>
<circle cx="1349" cy="520" r="7.500" fill="#f8f8f8" stroke="#dadada"/><path d="M1345 520h8M1349 516v8" stroke="#d8d8d8" stroke-width="1.300"/>

<text x="909" y="769.500" textLength="111" lengthAdjust="spacingAndGlyphs" style="fill:#111">No candidates found</text>
</svg>
</body>
</html>
